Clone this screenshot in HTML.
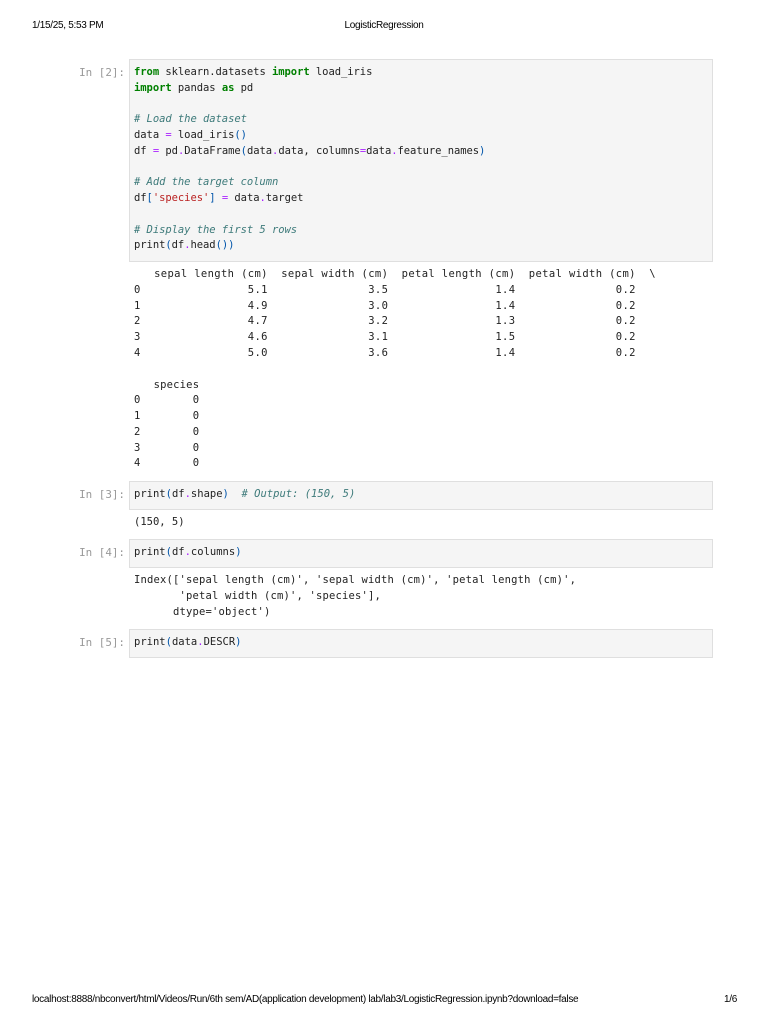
<!DOCTYPE html>
<html><head><meta charset="utf-8"><style>
body{margin:0;width:768px;height:1024px;background:#fff;position:relative;overflow:hidden;font-family:"Liberation Sans",sans-serif}
.hdr{position:absolute;font-size:10px;color:#000;letter-spacing:-0.3px}
.cell{position:absolute;left:129px;width:582px;background:#f5f5f5;border:1px solid #dfdfdf}
pre{margin:0;font-family:"DejaVu Sans Mono","Liberation Mono",monospace;font-size:10.5px;line-height:15.75px;color:#222;position:absolute;left:134px}
.p{position:absolute;right:643px;font-family:"DejaVu Sans Mono","Liberation Mono",monospace;font-size:10.9px;color:#999;line-height:15.75px}
.k{color:#008000;font-weight:bold}.c{color:#3d7a7a;font-style:italic}.o{color:#aa22ff}.b{color:#0055aa}.s{color:#ba2121}
</style></head><body>
<div class="hdr" style="left:32px;top:20px">1/15/25, 5:53 PM</div>
<div class="hdr" style="left:384px;top:20px;transform:translateX(-50%)">LogisticRegression</div>

<div class="cell" style="top:59px;height:201px"></div>
<div class="p" style="top:65px">In [2]:</div>
<pre style="top:65px;letter-spacing:-0.05px"><span class="k">from</span> sklearn.datasets <span class="k">import</span> load_iris
<span class="k">import</span> pandas <span class="k">as</span> pd

<span class="c"># Load the dataset</span>
data <span class="o">=</span> load_iris<span class="b">()</span>
df <span class="o">=</span> pd<span class="o">.</span>DataFrame<span class="b">(</span>data<span class="o">.</span>data, columns<span class="o">=</span>data<span class="o">.</span>feature_names<span class="b">)</span>

<span class="c"># Add the target column</span>
df<span class="b">[</span><span class="s">'species'</span><span class="b">]</span> <span class="o">=</span> data<span class="o">.</span>target

<span class="c"># Display the first 5 rows</span>
print<span class="b">(</span>df<span class="o">.</span>head<span class="b">())</span></pre>

<pre style="top:267px;letter-spacing:0.37px">   sepal length (cm)  sepal width (cm)  petal length (cm)  petal width (cm)  \
0                5.1               3.5                1.4               0.2   
1                4.9               3.0                1.4               0.2   
2                4.7               3.2                1.3               0.2   
3                4.6               3.1                1.5               0.2   
4                5.0               3.6                1.4               0.2   </pre>

<pre style="top:377.5px;letter-spacing:0.2px">   species  
0        0  
1        0  
2        0  
3        0  
4        0  </pre>

<div class="cell" style="top:481px;height:27px"></div>
<div class="p" style="top:487px">In [3]:</div>
<pre style="top:487px">print<span class="b">(</span>df<span class="o">.</span>shape<span class="b">)</span>  <span class="c"># Output: (150, 5)</span></pre>
<pre style="top:515px">(150, 5)</pre>

<div class="cell" style="top:539px;height:27px"></div>
<div class="p" style="top:545px">In [4]:</div>
<pre style="top:545px">print<span class="b">(</span>df<span class="o">.</span>columns<span class="b">)</span></pre>
<pre style="top:573px;letter-spacing:0.18px">Index(['sepal length (cm)', 'sepal width (cm)', 'petal length (cm)',
       'petal width (cm)', 'species'],
      dtype='object')</pre>

<div class="cell" style="top:629px;height:27px"></div>
<div class="p" style="top:635px">In [5]:</div>
<pre style="top:635px">print<span class="b">(</span>data<span class="o">.</span>DESCR<span class="b">)</span></pre>

<div class="hdr" style="left:32px;top:994px">localhost:8888/nbconvert/html/Videos/Run/6th sem/AD(application development) lab/lab3/LogisticRegression.ipynb?download=false</div>
<div class="hdr" style="left:724px;top:994px">1/6</div>
</body></html>
